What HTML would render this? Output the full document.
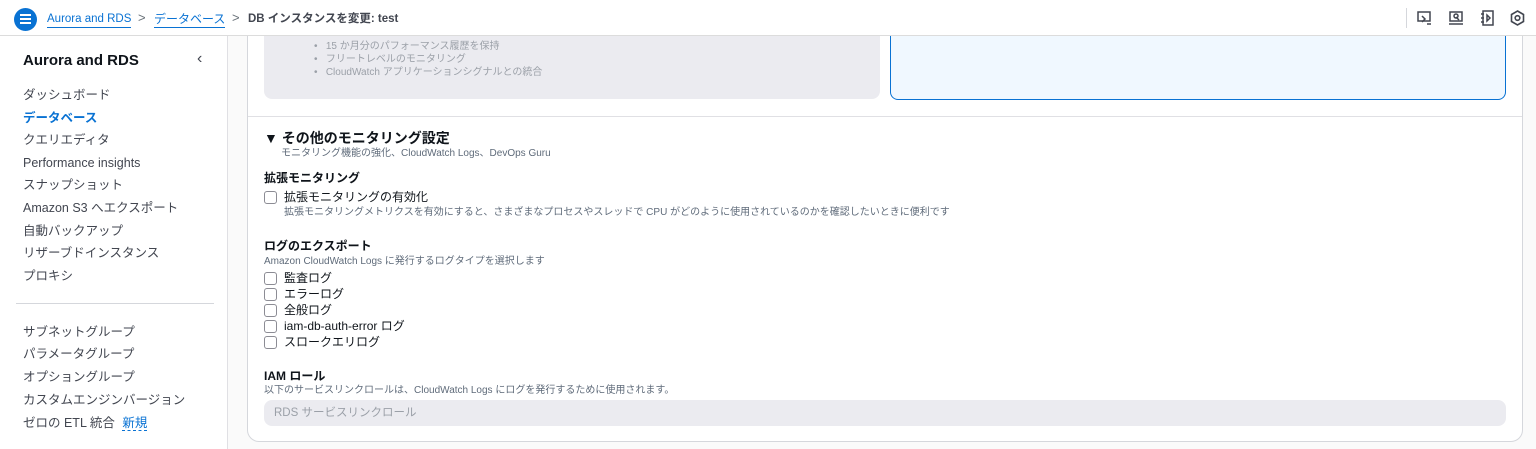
<!DOCTYPE html>
<html><head><meta charset="utf-8">
<style>
*{box-sizing:border-box;margin:0;padding:0}
body{width:1536px;height:449px;overflow:hidden;background:#fafafa;font-family:"Liberation Sans","Noto Sans CJK JP",sans-serif;color:#0f141a;position:relative}
.a{position:absolute;white-space:nowrap;line-height:16px}
.t{z-index:5}
.top{left:0;top:0;width:1536px;height:36px;background:#fff;border-bottom:1px solid #dcdcdc}
.side{left:0;top:36px;width:228px;height:413px;background:#fff;border-right:1px solid #e0e0e4}
.nav{font-size:12.5px;color:#424650;left:23px}
.box{left:247px;top:-20px;width:1276px;height:462px;background:#fff;border:1px solid #d5d7dc;border-radius:12px}
.cb{width:13px;height:13px;border:1px solid #8c8c94;border-radius:3px;left:264px;background:#fff}
.lbl{left:284px;font-size:12px;color:#0f141a}
.sm{font-size:10px;color:#5f6b7a}
.h{font-size:12px;font-weight:bold}
.bul{left:314px;font-size:10px;color:#9ba0a8;line-height:13px}
</style></head><body>
<div class="a box"></div>
<div class="a" style="left:264px;top:20px;width:616px;height:79px;background:#ebebf0;border-radius:8px"></div>
<div class="a bul" style="top:40px">•&nbsp;&nbsp; 15 か月分のパフォーマンス履歴を保持</div>
<div class="a bul" style="top:53px">•&nbsp;&nbsp; フリートレベルのモニタリング</div>
<div class="a bul" style="top:66px">•&nbsp;&nbsp; CloudWatch アプリケーションシグナルとの統合</div>
<div class="a" style="left:890px;top:20px;width:616px;height:80px;background:#f0f8ff;border:1.5px solid #0972d3;border-top:none;border-radius:0 0 8px 8px"></div>
<div class="a" style="left:248px;top:116px;width:1274px;height:1px;background:#e0e0e4"></div>

<div class="a t top"></div>
<div class="a t" style="left:14px;top:8px;width:23px;height:23px;border-radius:50%;background:#0972d3"></div>
<div class="a t" style="left:20px;top:14px;width:11px;height:2px;background:#fff;box-shadow:0 4px 0 #fff,0 8px 0 #fff"></div>
<div class="a t" style="left:47px;top:11px;font-size:11.5px;color:#0972d3;border-bottom:1px solid #0972d3">Aurora and RDS</div>
<div class="a t" style="left:138px;top:10px;font-size:13px;color:#687078">&gt;</div>
<div class="a t" style="left:154px;top:11px;font-size:12px;color:#0972d3;border-bottom:1px solid #0972d3">データベース</div>
<div class="a t" style="left:232px;top:10px;font-size:13px;color:#687078">&gt;</div>
<div class="a t" style="left:248px;top:11px;font-size:11.5px;font-weight:bold;color:#424650">DB インスタンスを変更: test</div>
<div class="a t" style="left:1406px;top:8px;width:1px;height:20px;background:#d5d7dc"></div>
<svg class="a t" style="left:1417px;top:11px" width="16" height="15" viewBox="0 0 16 15" fill="none" stroke="#424650" stroke-width="1.5"><rect x="1" y="1" width="12" height="9"/><path d="M5 5l3 3-3 3M10 13h4"/></svg>
<svg class="a t" style="left:1448px;top:11px" width="16" height="15" viewBox="0 0 16 15" fill="none" stroke="#424650" stroke-width="1.5"><rect x="2" y="1" width="12" height="9"/><path d="M1 13h14M8 6l3 3"/><circle cx="8" cy="5" r="2"/></svg>
<svg class="a t" style="left:1480px;top:10px" width="14" height="16" viewBox="0 0 14 16" fill="none" stroke="#424650" stroke-width="1.5"><rect x="3" y="1" width="10" height="14"/><path d="M1 4h3M1 8h3M1 12h3M7 5l3 3-3 3z"/></svg>
<svg class="a t" style="left:1510px;top:10px" width="15" height="16" viewBox="0 0 15 16" fill="none" stroke="#424650" stroke-width="1.6"><path d="M7.5 1l6 3.5v7l-6 3.5-6-3.5v-7z"/><circle cx="7.5" cy="8" r="2.3"/></svg>

<div class="a side"></div>
<div class="a" style="left:23px;top:52px;font-size:15px;font-weight:bold;line-height:18px">Aurora and RDS</div>
<div class="a" style="left:197px;top:51px;font-size:16px;color:#424650">&lsaquo;</div>
<div class="a nav" style="top:87px">ダッシュボード</div>
<div class="a nav" style="top:110px;color:#0972d3;font-weight:bold">データベース</div>
<div class="a nav" style="top:132px">クエリエディタ</div>
<div class="a nav" style="top:155px">Performance insights</div>
<div class="a nav" style="top:177px">スナップショット</div>
<div class="a nav" style="top:200px">Amazon S3 へエクスポート</div>
<div class="a nav" style="top:223px">自動バックアップ</div>
<div class="a nav" style="top:245px">リザーブドインスタンス</div>
<div class="a nav" style="top:268px">プロキシ</div>
<div class="a" style="left:16px;top:303px;width:198px;height:1px;background:#d5d7dc"></div>
<div class="a nav" style="top:324px">サブネットグループ</div>
<div class="a nav" style="top:346px">パラメータグループ</div>
<div class="a nav" style="top:369px">オプショングループ</div>
<div class="a nav" style="top:392px">カスタムエンジンバージョン</div>
<div class="a nav" style="top:415px">ゼロの ETL 統合 <span style="color:#0972d3;border-bottom:1px dashed #0972d3;margin-left:4px">新規</span></div>

<div class="a" style="left:264px;top:130px;font-size:14px;font-weight:bold;line-height:17px">▼ その他のモニタリング設定</div>
<div class="a sm" style="left:281px;top:146px">モニタリング機能の強化、CloudWatch Logs、DevOps Guru</div>
<div class="a h" style="left:264px;top:170px">拡張モニタリング</div>
<div class="a cb" style="top:191px"></div>
<div class="a lbl" style="top:189px">拡張モニタリングの有効化</div>
<div class="a sm" style="left:284px;top:205px">拡張モニタリングメトリクスを有効にすると、さまざまなプロセスやスレッドで CPU がどのように使用されているのかを確認したいときに便利です</div>
<div class="a h" style="left:264px;top:238px">ログのエクスポート</div>
<div class="a sm" style="left:264px;top:254px">Amazon CloudWatch Logs に発行するログタイプを選択します</div>
<div class="a cb" style="top:272px"></div><div class="a lbl" style="top:270px">監査ログ</div>
<div class="a cb" style="top:288px"></div><div class="a lbl" style="top:286px">エラーログ</div>
<div class="a cb" style="top:304px"></div><div class="a lbl" style="top:302px">全般ログ</div>
<div class="a cb" style="top:320px"></div><div class="a lbl" style="top:318px">iam-db-auth-error ログ</div>
<div class="a cb" style="top:336px"></div><div class="a lbl" style="top:334px">スロークエリログ</div>
<div class="a h" style="left:264px;top:368px">IAM ロール</div>
<div class="a sm" style="left:264px;top:383px">以下のサービスリンクロールは、CloudWatch Logs にログを発行するために使用されます。</div>
<div class="a" style="left:264px;top:400px;width:1242px;height:26px;background:#ebebf0;border-radius:8px"></div>
<div class="a" style="left:274px;top:405px;font-size:11.5px;color:#9ba0a8">RDS サービスリンクロール</div>
</body></html>
